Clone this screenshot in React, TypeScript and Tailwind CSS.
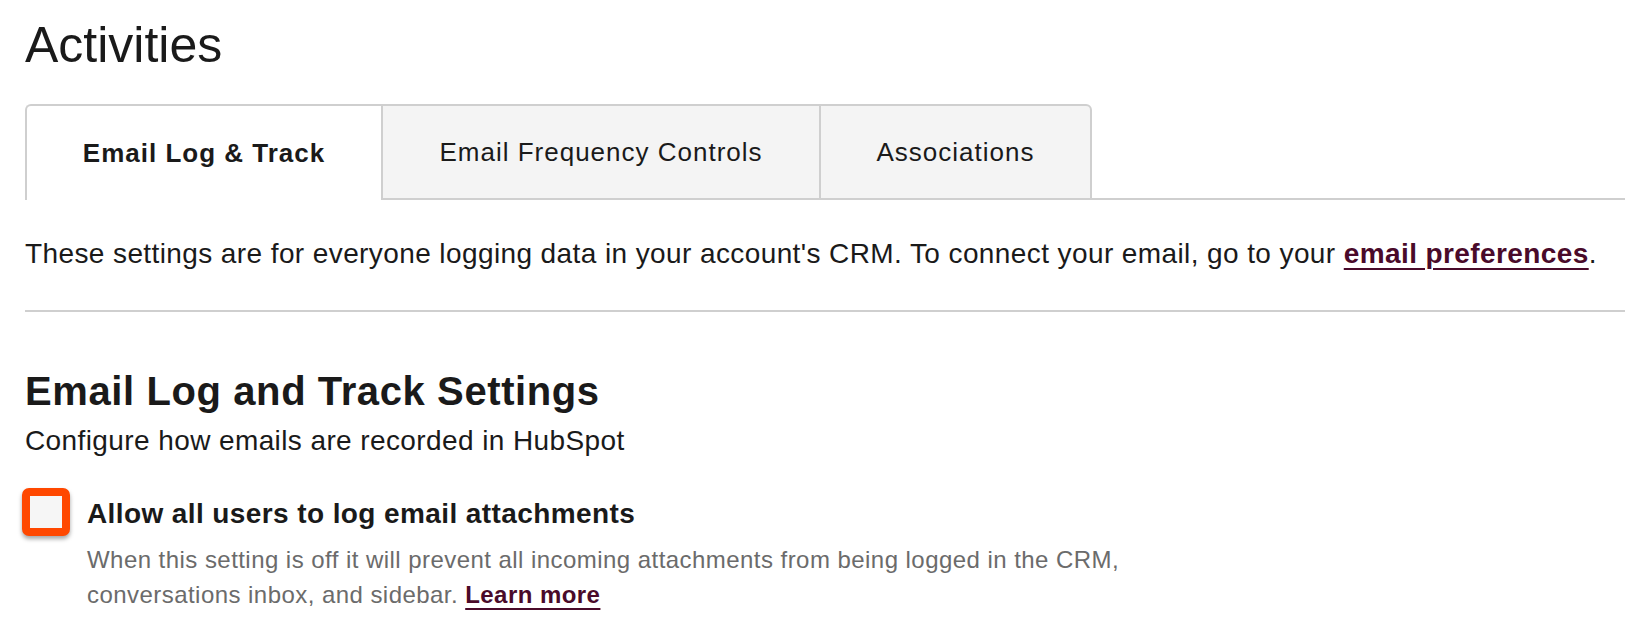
import React from "react";

const tabs = [
  { label: "Email Log & Track", width: "w-[356px]", active: true },
  { label: "Email Frequency Controls", width: "w-[438px]", active: false },
  { label: "Associations", width: "w-[273px]", active: false },
];

export default function App() {
  return (
    <div className="min-h-[638px] bg-white pl-[25px] text-[#1a1a1a] font-['Liberation_Sans',Arial,sans-serif]">
      <h1 className="pt-[15px] text-[50px] leading-[60px] font-normal">Activities</h1>

      {/* tab strip */}
      <div className="mt-[29px] flex">
        {tabs.map((t, i) => (
          <div
            key={t.label}
            className={`flex h-[96px] items-center justify-center border-t-2 border-l-2 border-[#cfcfcf] text-[26px] tracking-[1px] ${t.width} ${
              t.active ? "bg-white font-bold" : "border-b-2 bg-[#f4f4f4]"
            } ${i === 0 ? "rounded-tl-md" : ""} ${i === tabs.length - 1 ? "rounded-tr-md border-r-2" : ""}`}
          >
            {t.label}
          </div>
        ))}
        <div className="flex-1 border-b-2 border-[#cfcfcf]" />
      </div>

      <p className="mt-[34px] whitespace-nowrap text-[28px] leading-[40px] tracking-[0.4px]">
        These settings are for everyone logging data in your account's CRM. To connect your email, go to your{" "}
        <a href="#" className="font-bold text-[#4a0a2a] underline decoration-2 underline-offset-[5px]">
          email preferences
        </a>
        .
      </p>

      <div className="mt-[36px] border-t-2 border-[#cfcfcf]" />

      <section className="mt-[56px]">
        <h2 className="text-[40px] leading-[46px] font-bold tracking-[0.6px]">Email Log and Track Settings</h2>
        <p className="mt-[7px] text-[28px] leading-[40px] tracking-[0.4px]">Configure how emails are recorded in HubSpot</p>

        <div className="mt-[35px] flex items-start gap-[17px]">
          <div className="-ml-[3px] mt-[-8px] h-[48px] w-[48px] shrink-0 rounded-[7px] border-[8px] border-[#ff4800] bg-[#f6f6f6] shadow-[0_3px_4px_rgba(0,0,0,0.35)]" />
          <div>
            <div className="text-[28px] leading-[36px] font-bold tracking-[0.4px]">Allow all users to log email attachments</div>
            <p className="mt-[10px] text-[24px] leading-[35px] tracking-[0.45px] text-[#6b6b6b]">
              When this setting is off it will prevent all incoming attachments from being logged in the CRM,
              <br />
              conversations inbox, and sidebar.{" "}
              <a href="#" className="font-bold text-[#4a0a2a] underline decoration-2 underline-offset-[5px]">
                Learn more
              </a>
            </p>
          </div>
        </div>
      </section>
    </div>
  );
}
